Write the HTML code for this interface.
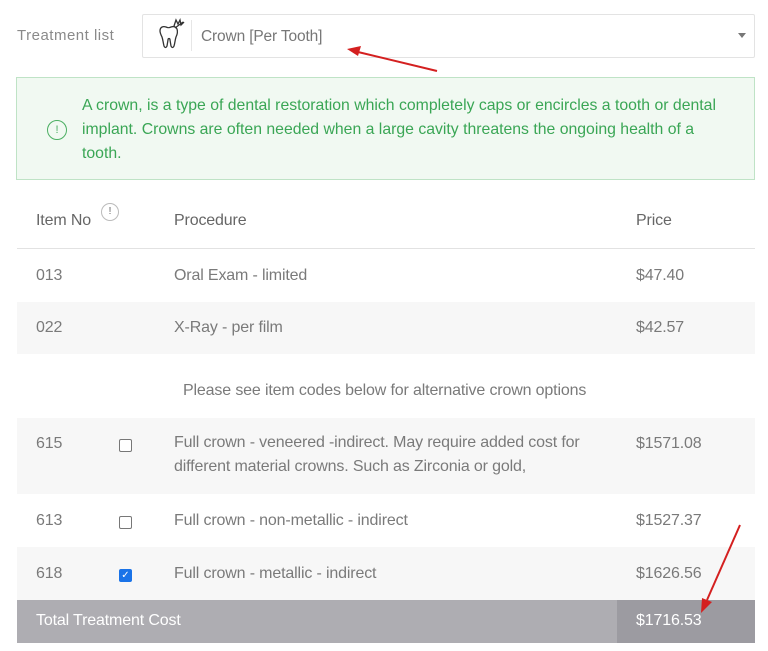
<!DOCTYPE html>
<html><head><meta charset="utf-8"><style>
body{margin:0;width:768px;height:651px;background:#fff;font-family:"Liberation Sans",sans-serif;position:relative;overflow:hidden;color:#777}
.abs{position:absolute}
.row{position:absolute;left:17px;width:738px}
.t{position:absolute;font-size:16px;color:#7a7a7a;letter-spacing:-0.15px;white-space:nowrap}
.cb{position:absolute;left:119px;width:11px;height:11px;border:1px solid #777;border-radius:2px;background:#fff}
</style></head><body>
<div class="t" style="left:17px;top:27px;font-size:15px;color:#8a8a8a;letter-spacing:0.5px">Treatment list</div>
<div class="abs" style="left:142px;top:14px;width:611px;height:42px;border:1px solid #e3e3e3;border-radius:2px"></div>
<div class="abs" style="left:191px;top:20px;width:1px;height:31px;background:#e6e6e6"></div>
<svg class="abs" style="left:156px;top:18px" width="30" height="34" viewBox="0 0 30 34" fill="none" stroke="#333" stroke-width="1.3">
<path d="M4 13c0-4 3-5 6-4 2 1 3 1 5 0 3-1 5 0 6 2 1 3 0 6-1 8-1 3-1 6-2 9-1 2-2 2-3 0l-1-6c0-2-2-2-2 0l-1 6c-1 2-2 2-3 0-1-4-1-6-2-9-1-2-2-4-2-6z"/>
<path d="M18 8l2-6 2 4 2-4 1 5 3-3"/><path d="M19 10l8-6"/></svg>
<div class="t" style="left:201px;top:28px;color:#777;font-size:15.5px">Crown [Per Tooth]</div>
<svg class="abs" style="left:738px;top:33px" width="8" height="5"><path d="M0 0h8L4 5z" fill="#777"/></svg>
<div class="abs" style="left:16px;top:77px;width:737px;height:101px;background:#f1f9f2;border:1px solid #bfe3c6"></div>
<div class="abs" style="left:47px;top:120px;width:18px;height:18px;border:1.2px solid #4caf63;border-radius:50%;color:#4caf63;font-size:11px;text-align:center;line-height:18px">!</div>
<div class="abs" style="left:82px;top:94px;width:642px;font-size:15.8px;line-height:24px;color:#3aa655">A crown, is a type of dental restoration which completely caps or encircles a tooth or dental implant. Crowns are often needed when a large cavity threatens the ongoing health of a tooth.</div>
<div class="t" style="left:36px;top:212px;color:#666">Item No</div>
<div class="abs" style="left:101px;top:203px;width:16px;height:16px;border:1px solid #bbb;border-radius:50%;font-size:10px;text-align:center;line-height:16px;color:#666">!</div>
<div class="t" style="left:174px;top:212px;color:#666">Procedure</div>
<div class="t" style="left:636px;top:212px;color:#666">Price</div>
<div class="row" style="top:248px;height:1px;background:#e2e2e2"></div>
<div class="t" style="left:36px;top:267px">013</div><div class="t" style="left:174px;top:267px">Oral Exam - limited</div><div class="t" style="left:636px;top:267px">$47.40</div>
<div class="row" style="top:302px;height:52px;background:#f7f7f7"></div>
<div class="t" style="left:36px;top:319px">022</div><div class="t" style="left:174px;top:319px">X-Ray - per film</div><div class="t" style="left:636px;top:319px">$42.57</div>
<div class="t" style="left:183px;top:382px">Please see item codes below for alternative crown options</div>
<div class="row" style="top:418px;height:76px;background:#f7f7f7"></div>
<div class="t" style="left:36px;top:435px">615</div><div class="cb" style="top:439px"></div>
<div class="t" style="left:174px;line-height:24px;top:431px">Full crown - veneered -indirect. May require added cost for<br>different material crowns. Such as Zirconia or gold,</div>
<div class="t" style="left:636px;top:435px">$1571.08</div>
<div class="t" style="left:36px;top:512px">613</div><div class="cb" style="top:516px"></div>
<div class="t" style="left:174px;top:512px">Full crown - non-metallic - indirect</div><div class="t" style="left:636px;top:512px">$1527.37</div>
<div class="row" style="top:547px;height:53px;background:#f7f7f7"></div>
<div class="t" style="left:36px;top:565px">618</div>
<div class="abs" style="left:119px;top:569px;width:13px;height:13px;background:#1a73e8;border-radius:2px;color:#fff;font-size:10px;text-align:center;line-height:13px">✓</div>
<div class="t" style="left:174px;top:565px">Full crown - metallic - indirect</div><div class="t" style="left:636px;top:565px">$1626.56</div>
<div class="row" style="top:600px;height:43px;background:#aeadb2"></div>
<div class="abs" style="left:617px;top:600px;width:138px;height:43px;background:#9c9ba1"></div>
<div class="t" style="left:36px;top:612px;color:#fff">Total Treatment Cost</div>
<div class="t" style="left:636px;top:612px;color:#fff">$1716.53</div>
<svg class="abs" style="left:0;top:0" width="768" height="651">
<line x1="437" y1="71" x2="358" y2="52" stroke="#d42020" stroke-width="2"/>
<path d="M347 49l14-3-3 10z" fill="#d42020"/>
<line x1="740" y1="525" x2="707" y2="600" stroke="#d42020" stroke-width="2"/>
<path d="M701 613l1-15 10 4z" fill="#d42020"/>
</svg>
</body></html>
